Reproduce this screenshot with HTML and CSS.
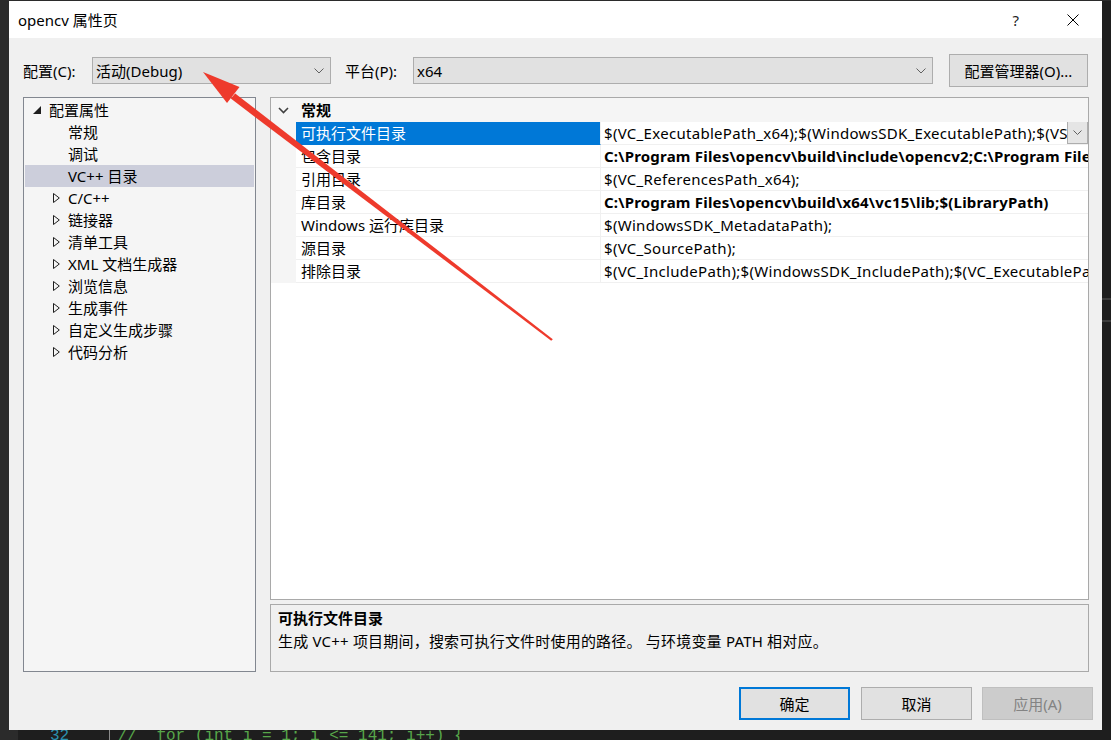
FILE: index.html
```html
<!DOCTYPE html>
<html lang="zh-CN">
<head>
<meta charset="utf-8">
<title>opencv 属性页</title>
<link rel="stylesheet" href="styles.css">
</head>
<body>
<div class="screen">
  <div class="dialog-row">
    <div class="dialog">
      <div class="titlebar">
        <span class="title">opencv 属性页</span>
        <span class="help">?</span>
        <svg class="close" width="12" height="12" viewBox="0 0 12 12"><path d="M0.5 0.5 L11.5 11.5 M11.5 0.5 L0.5 11.5" stroke="#000" stroke-width="1" fill="none"/></svg>
      </div>
      <div class="content">
        <div class="toolbar">
          <span class="lbl lbl-config">配置(C):</span>
          <div class="combo combo-config"><span>活动(Debug)</span><svg class="chev" width="10" height="6" viewBox="0 0 10 6"><path d="M0.5 0.5 L5 5 L9.5 0.5" stroke="#606060" fill="none"/></svg></div>
          <span class="lbl lbl-platform">平台(P):</span>
          <div class="combo combo-platform"><span>x64</span><svg class="chev" width="10" height="6" viewBox="0 0 10 6"><path d="M0.5 0.5 L5 5 L9.5 0.5" stroke="#606060" fill="none"/></svg></div>
          <button class="btn btn-manager">配置管理器(O)...</button>
        </div>
        <div class="main">
          <div class="tree">
            <div class="node root"><svg class="tri" width="8" height="8" viewBox="0 0 8 8"><path d="M8 0 L8 8 L0 8 Z" fill="#1e1e1e"/></svg><span>配置属性</span></div>
            <div class="node leaf">常规</div>
            <div class="node leaf">调试</div>
            <div class="node leaf selected">VC++ 目录</div>
            <div class="node child"><svg class="tri2" width="7" height="10" viewBox="0 0 7 10"><path d="M0.5 0.5 L6.3 5 L0.5 9.5 Z" stroke="#1e1e1e" fill="none"/></svg><span>C/C++</span></div>
            <div class="node child"><svg class="tri2" width="7" height="10" viewBox="0 0 7 10"><path d="M0.5 0.5 L6.3 5 L0.5 9.5 Z" stroke="#1e1e1e" fill="none"/></svg><span>链接器</span></div>
            <div class="node child"><svg class="tri2" width="7" height="10" viewBox="0 0 7 10"><path d="M0.5 0.5 L6.3 5 L0.5 9.5 Z" stroke="#1e1e1e" fill="none"/></svg><span>清单工具</span></div>
            <div class="node child"><svg class="tri2" width="7" height="10" viewBox="0 0 7 10"><path d="M0.5 0.5 L6.3 5 L0.5 9.5 Z" stroke="#1e1e1e" fill="none"/></svg><span>XML 文档生成器</span></div>
            <div class="node child"><svg class="tri2" width="7" height="10" viewBox="0 0 7 10"><path d="M0.5 0.5 L6.3 5 L0.5 9.5 Z" stroke="#1e1e1e" fill="none"/></svg><span>浏览信息</span></div>
            <div class="node child"><svg class="tri2" width="7" height="10" viewBox="0 0 7 10"><path d="M0.5 0.5 L6.3 5 L0.5 9.5 Z" stroke="#1e1e1e" fill="none"/></svg><span>生成事件</span></div>
            <div class="node child"><svg class="tri2" width="7" height="10" viewBox="0 0 7 10"><path d="M0.5 0.5 L6.3 5 L0.5 9.5 Z" stroke="#1e1e1e" fill="none"/></svg><span>自定义生成步骤</span></div>
            <div class="node child"><svg class="tri2" width="7" height="10" viewBox="0 0 7 10"><path d="M0.5 0.5 L6.3 5 L0.5 9.5 Z" stroke="#1e1e1e" fill="none"/></svg><span>代码分析</span></div>
          </div>
          <div class="right">
            <div class="grid">
              <div class="ghead">
                <div class="gutter"><svg width="11" height="7" viewBox="0 0 11 7"><path d="M1 1 L5.5 5.5 L10 1" stroke="#404040" stroke-width="1.6" fill="none"/></svg></div>
                <span class="gtitle">常规</span>
              </div>
              <div class="grow">
                <div class="gutter"></div>
                <div class="gname sel">可执行文件目录</div>
                <div class="gval"><span class="vtext">$(VC_ExecutablePath_x64);$(WindowsSDK_ExecutablePath);$(VS_ExecutablePath);$(MSBuild_ExecutablePath);$(FxCopDir);$(PATH);</span><span class="ddbtn"><svg width="9" height="5" viewBox="0 0 9 5"><path d="M0.5 0.5 L4.5 4.5 L8.5 0.5" stroke="#606060" fill="none"/></svg></span></div>
              </div>
              <div class="grow">
                <div class="gutter"></div>
                <div class="gname">包含目录</div>
                <div class="gval bold"><span class="vtext">C:\Program Files\opencv\build\include\opencv2;C:\Program Files\opencv\build\include;$(IncludePath)</span></div>
              </div>
              <div class="grow">
                <div class="gutter"></div>
                <div class="gname">引用目录</div>
                <div class="gval"><span class="vtext">$(VC_ReferencesPath_x64);</span></div>
              </div>
              <div class="grow">
                <div class="gutter"></div>
                <div class="gname">库目录</div>
                <div class="gval bold"><span class="vtext">C:\Program Files\opencv\build\x64\vc15\lib;$(LibraryPath)</span></div>
              </div>
              <div class="grow">
                <div class="gutter"></div>
                <div class="gname">Windows 运行库目录</div>
                <div class="gval"><span class="vtext">$(WindowsSDK_MetadataPath);</span></div>
              </div>
              <div class="grow">
                <div class="gutter"></div>
                <div class="gname">源目录</div>
                <div class="gval"><span class="vtext">$(VC_SourcePath);</span></div>
              </div>
              <div class="grow">
                <div class="gutter"></div>
                <div class="gname">排除目录</div>
                <div class="gval"><span class="vtext">$(VC_IncludePath);$(WindowsSDK_IncludePath);$(VC_ExecutablePath_x64);$(VC_LibraryPath_x64);</span></div>
              </div>
            </div>
            <div class="desc">
              <div class="desc-title">可执行文件目录</div>
              <div class="desc-text">生成 VC++ 项目期间，搜索可执行文件时使用的路径。 与环境变量 PATH 相对应。</div>
            </div>
          </div>
        </div>
        <div class="buttons">
          <button class="btn btn-ok">确定</button>
          <button class="btn btn-cancel">取消</button>
          <button class="btn btn-apply">应用(A)</button>
        </div>
      </div>
    </div>
    <div class="side"></div>
  </div>
  <div class="code">
    <div class="code-left"></div>
    <div class="code-main">
      <span class="lineno">32</span>
      <span class="code-bar"></span>
      <span class="code-text">//&nbsp;&nbsp;for (int i = 1; i &lt;= 141; i++) {</span>
    </div>
  </div>
</div>
<svg class="arrow" width="1111" height="740" viewBox="0 0 1111 740">
  <polygon points="552.8,339.3 235.2,93.4 230.8,98.6 551.2,340.7" fill="#ee3a2c"/>
  <polygon points="203,72 227,103 239.5,87" fill="#ee3a2c"/>
</svg>
</body>
</html>
```
FILE: styles.css
```css
* { box-sizing: border-box; }
html, body { margin: 0; padding: 0; }
body {
  width: 1111px;
  height: 740px;
  overflow: hidden;
  background: #2b2b2b;
  font-family: "Noto Sans", "Noto Sans CJK SC", sans-serif;
  font-size: 15px;
  color: #000;
  position: relative;
}
.screen { display: flex; flex-direction: column; padding-top: 1px; }
.dialog-row { display: flex; padding-left: 9px; height: 729px; }
.dialog {
  width: 1093px;
  flex: none;
  height: 729px;
  background: #f0f0f0;
  display: flex;
  flex-direction: column;
  overflow: hidden;
}
.side {
  flex: 1;
  background: #1e1e1e linear-gradient(to bottom, transparent 297px, #3c3c3c 297px, #3c3c3c 299px, transparent 299px, transparent 319px, #3c3c3c 319px, #3c3c3c 321px, transparent 321px);
}
.titlebar {
  height: 37px;
  flex: none;
  background: #fff;
  display: flex;
  align-items: center;
  padding: 0 23px 0 9px;
}
.title { flex: 1; font-size: 15px; line-height: 20px; }
.help { font-size: 15px; line-height: 20px; margin-right: 48px; color: #222; }
.close { display: block; }

.content {
  flex: 1;
  min-height: 0;
  display: flex;
  flex-direction: column;
  padding: 16px 9px 10px 14px;
}
.toolbar { display: flex; align-items: center; height: 33px; margin-right: 5px; flex: none; }
.lbl { line-height: 20px; flex: none; }
.lbl-config { width: 69px; }
.lbl-platform { width: 68px; margin-left: 14px; }
.combo {
  height: 27px;
  flex: none;
  background: #e1e1e1;
  border: 1px solid #adadad;
  display: flex;
  align-items: center;
  padding: 0 6px 0 3px;
}
.combo span { flex: 1; line-height: 20px; }
.chev { display: block; }
.combo-config { width: 239px; }
.combo-platform { width: 520px; }
.btn {
  font-family: inherit;
  font-size: 15px;
  color: #000;
  background: #e1e1e1;
  border: 1px solid #adadad;
  padding: 0;
  margin: 0;
  flex: none;
}
.btn-manager { width: 139px; height: 33px; margin-left: 16px; }

.main { display: flex; gap: 14px; margin-top: 10px; height: 575px; margin-right: 4px; flex: none; }
.tree {
  width: 233px;
  flex: none;
  background: #f5f5f5;
  border: 1px solid #828790;
  padding: 1px;
}
.node { height: 22px; display: flex; align-items: center; line-height: 20px; white-space: nowrap; }
.node.root { padding-left: 8px; }
.node.root .tri { margin-right: 8px; margin-top: -1px; }
.node.leaf { padding-left: 43px; }
.node.child { padding-left: 28px; }
.node.child .tri2 { margin-right: 8px; }
.node.selected { background: #cccedb; }

.right { flex: 1; min-width: 0; display: flex; flex-direction: column; }
.grid {
  flex: 1;
  min-height: 0;
  background: #fff;
  border: 1px solid #a9a9a9;
  overflow: hidden;
}
.ghead { height: 24px; display: flex; align-items: center; background: #f5f5f5; }
.gutter { width: 25px; align-self: stretch; display: flex; align-items: center; justify-content: center; background: #f5f5f5; flex: none; }
.gtitle { font-weight: bold; line-height: 20px; padding-left: 5px; }
.grow { display: flex; height: 23px; }
.gname {
  width: 305px;
  flex: none;
  padding-left: 5px;
  line-height: 22px;
  border-bottom: 1px solid #f0f0f0;
  border-right: 1px solid #f0f0f0;
  white-space: nowrap;
}
.gname.sel { background: #0078d7; color: #fff; border-bottom-color: #0078d7; }
.gval {
  flex: 1;
  min-width: 0;
  display: flex;
  padding-left: 3px;
  line-height: 22px;
  border-bottom: 1px solid #f0f0f0;
  white-space: nowrap;
  overflow: hidden;
  letter-spacing: 0.3px;
}
.gval.bold { font-weight: bold; letter-spacing: 0.2px; }
.vtext { flex: 1; overflow: hidden; min-width: 0; }
.ddbtn {
  width: 21px;
  flex: none;
  height: 23px;
  margin-top: -1px;
  background: #e5e5e5;
  border: 1px solid #adadad;
  display: flex;
  align-items: center;
  justify-content: center;
}
.ddbtn svg { display: block; }

.desc {
  height: 68px;
  flex: none;
  margin-top: 4px;
  background: #f0f0f0;
  border: 1px solid #a9a9a9;
  padding: 2px 7px;
}
.desc-title { font-weight: bold; line-height: 22px; }
.desc-text { line-height: 24px; letter-spacing: 0.2px; }

.buttons { display: flex; justify-content: flex-end; margin-top: 15px; gap: 11px; flex: none; }
.btn-ok, .btn-cancel, .btn-apply { width: 111px; height: 33px; }
.btn-ok { border: 2px solid #0078d7; }
.btn-apply { margin-left: -1px; background: #cccccc; border-color: #bfbfbf; color: #838383; }

.code { display: flex; height: 10px; overflow: hidden; }
.code-left { width: 18px; background: #2b2b2b; }
.code-main {
  flex: 1;
  background: #1e1e1e;
  display: flex;
  font-family: "Liberation Mono", monospace;
  font-size: 16px;
  line-height: 19px;
}
.lineno { color: #2b91af; margin-left: 32px; width: 59px; margin-top: -3px; }
.code-bar { width: 1px; background: #8a8a8a; margin-right: 8px; }
.code-text { color: #57a64a; margin-top: -3px; white-space: pre; }

.arrow { position: absolute; left: 0; top: 0; pointer-events: none; }
```
